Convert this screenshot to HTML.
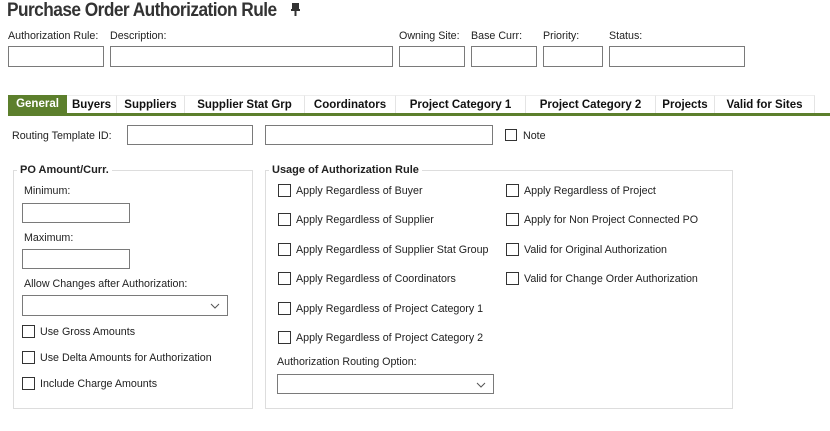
<!DOCTYPE html>
<html><head><style>
*{box-sizing:border-box;margin:0;padding:0}
body{width:830px;height:431px;background:#fff;font-family:"Liberation Sans",sans-serif;font-size:10.7px;color:#222;position:relative;overflow:hidden}
.a{position:absolute;white-space:nowrap}
.in{position:absolute;border:1px solid #7a7a7a;background:#fff}
.cb{position:absolute;width:13px;height:13px;border:1px solid #333;background:#fff}
.tab{position:absolute;top:95px;height:19px;font-family:"Liberation Sans",sans-serif;font-weight:bold;font-size:11.5px;line-height:18px;text-align:center;border-right:1px solid #e4e4e4;border-top:1px solid #eee;color:#111}
.fs{position:absolute;border:1px solid #ddd}
.lg{position:absolute;background:#fff;font-weight:bold;padding:0 3px;color:#222;font-size:11px}
.sel{position:absolute;border:1px solid #7a7a7a;background:#fff}
.sel svg{position:absolute;right:7px;top:7px}
</style></head><body>
<div class="a" style="left:7px;top:0;font-family:'Liberation Sans',sans-serif;font-weight:bold;font-size:19px;letter-spacing:-0.6px;transform:scaleX(0.91);transform-origin:left;color:#333">Purchase Order Authorization Rule</div>
<svg class="a" style="left:290px;top:3px" width="11" height="13" viewBox="0 0 11 13"><path d="M2 1h7M3 1v5M8 1v5M1 7h9M5.5 7v6" stroke="#333" stroke-width="2" fill="none"/><rect x="3" y="1" width="5" height="6" fill="#333"/></svg>
<div class="a" style="left:8px;top:30px">Authorization Rule:</div>
<div class="a" style="left:110px;top:30px">Description:</div>
<div class="a" style="left:399px;top:30px">Owning Site:</div>
<div class="a" style="left:471px;top:30px">Base Curr:</div>
<div class="a" style="left:543px;top:30px">Priority:</div>
<div class="a" style="left:609px;top:30px">Status:</div>
<div class="in" style="left:8px;top:46px;width:96px;height:21px"></div>
<div class="in" style="left:110px;top:46px;width:283px;height:21px"></div>
<div class="in" style="left:399px;top:46px;width:66px;height:21px"></div>
<div class="in" style="left:471px;top:46px;width:66px;height:21px"></div>
<div class="in" style="left:543px;top:46px;width:60px;height:21px"></div>
<div class="in" style="left:609px;top:46px;width:136px;height:21px"></div>

<div class="tab" style="left:8px;width:59px;background:#5c7f2c;color:#fff;border:none">General</div>
<div class="tab" style="left:67px;width:50px">Buyers</div>
<div class="tab" style="left:117px;width:68px">Suppliers</div>
<div class="tab" style="left:185px;width:120px">Supplier Stat Grp</div>
<div class="tab" style="left:305px;width:91px">Coordinators</div>
<div class="tab" style="left:396px;width:130px">Project Category 1</div>
<div class="tab" style="left:526px;width:130px">Project Category 2</div>
<div class="tab" style="left:656px;width:59px">Projects</div>
<div class="tab" style="left:715px;width:100px">Valid for Sites</div>
<div class="a" style="left:8px;top:113px;width:822px;height:3px;background:#5c7f2c"></div>

<div class="a" style="left:12px;top:130px">Routing Template ID:</div>
<div class="in" style="left:127px;top:125px;width:126px;height:20px"></div>
<div class="in" style="left:265px;top:125px;width:228px;height:20px"></div>
<div class="cb" style="left:505px;top:129px;width:12px;height:12px"></div>
<div class="a" style="left:523px;top:130px">Note</div>

<div class="fs" style="left:13px;top:170px;width:240px;height:239px"></div>
<div class="lg" style="left:17px;top:164px">PO Amount/Curr.</div>
<div class="a" style="left:24px;top:185px">Minimum:</div>
<div class="in" style="left:22px;top:203px;width:108px;height:20px"></div>
<div class="a" style="left:24px;top:232px">Maximum:</div>
<div class="in" style="left:22px;top:249px;width:108px;height:20px"></div>
<div class="a" style="left:24px;top:278px">Allow Changes after Authorization:</div>
<div class="sel" style="left:22px;top:295px;width:206px;height:21px"><svg width="10" height="6"><path d="M1 1l4 4 4-4" stroke="#555" fill="none"/></svg></div>
<div class="cb" style="left:22px;top:325px"></div><div class="a" style="left:40px;top:326px">Use Gross Amounts</div>
<div class="cb" style="left:22px;top:351px"></div><div class="a" style="left:40px;top:352px">Use Delta Amounts for Authorization</div>
<div class="cb" style="left:22px;top:377px"></div><div class="a" style="left:40px;top:378px">Include Charge Amounts</div>

<div class="fs" style="left:265px;top:170px;width:468px;height:239px"></div>
<div class="lg" style="left:269px;top:164px">Usage of Authorization Rule</div>
<div class="cb" style="left:278px;top:184px"></div><div class="a" style="left:296px;top:185px">Apply Regardless of Buyer</div>
<div class="cb" style="left:278px;top:213px"></div><div class="a" style="left:296px;top:214px">Apply Regardless of Supplier</div>
<div class="cb" style="left:278px;top:243px"></div><div class="a" style="left:296px;top:244px">Apply Regardless of Supplier Stat Group</div>
<div class="cb" style="left:278px;top:272px"></div><div class="a" style="left:296px;top:273px">Apply Regardless of Coordinators</div>
<div class="cb" style="left:278px;top:302px"></div><div class="a" style="left:296px;top:303px">Apply Regardless of Project Category 1</div>
<div class="cb" style="left:278px;top:331px"></div><div class="a" style="left:296px;top:332px">Apply Regardless of Project Category 2</div>
<div class="cb" style="left:506px;top:184px"></div><div class="a" style="left:524px;top:185px">Apply Regardless of Project</div>
<div class="cb" style="left:506px;top:213px"></div><div class="a" style="left:524px;top:214px">Apply for Non Project Connected PO</div>
<div class="cb" style="left:506px;top:243px"></div><div class="a" style="left:524px;top:244px">Valid for Original Authorization</div>
<div class="cb" style="left:506px;top:272px"></div><div class="a" style="left:524px;top:273px">Valid for Change Order Authorization</div>
<div class="a" style="left:277px;top:356px">Authorization Routing Option:</div>
<div class="sel" style="left:277px;top:374px;width:217px;height:20px"><svg width="10" height="6"><path d="M1 1l4 4 4-4" stroke="#555" fill="none"/></svg></div>
</body></html>
